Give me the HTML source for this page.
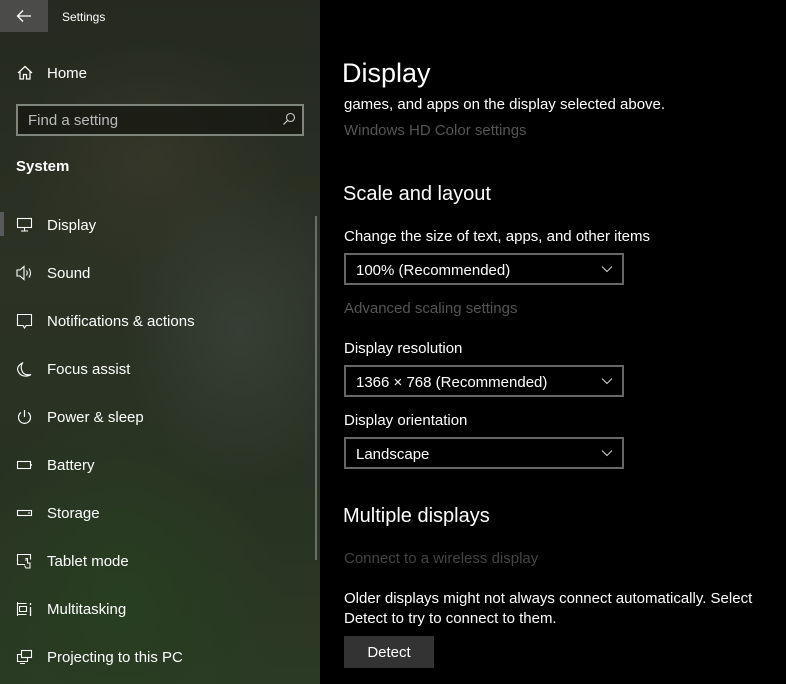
<!DOCTYPE html>
<html><head><meta charset="utf-8"><style>
*{margin:0;padding:0;box-sizing:border-box}
body{width:786px;height:684px;overflow:hidden;background:#000;font-family:"Liberation Sans",sans-serif;color:#fff;position:relative}
#side{position:absolute;left:0;top:0;width:320px;height:684px;background:
radial-gradient(ellipse 120px 160px at 240px 330px,rgba(70,76,72,.45),transparent),
radial-gradient(ellipse 140px 120px at 150px 160px,rgba(66,64,48,.45),transparent),
radial-gradient(ellipse 160px 200px at 120px 600px,rgba(40,64,34,.8),transparent),
linear-gradient(180deg,#25291f 0%,#2c3224 40%,#283222 70%,#2a3a24 100%)}
.a{position:absolute;white-space:nowrap}
.it{position:absolute;left:47px;font-size:15px;color:#fff;margin-top:1px}
.ic{position:absolute;left:16px;width:18px;height:16px}
.r{position:absolute;left:344px;font-size:15px;white-space:nowrap;margin-top:1px}
.dd{position:absolute;left:344px;width:280px;height:32px;border:2px solid #666;font-size:15px;padding:7px 0 0 10px}
.dd svg{position:absolute;right:9px;top:10px}
.g{color:#555}
</style></head><body>
<div id="side">
<div class="a" style="left:0;top:0;width:48px;height:32px;background:#4b4b49"></div>
<svg class="a" style="left:16px;top:9px" width="16" height="14"><path d="M15 7H2M7 1.5L1.5 7 7 12.5" stroke="#fff" stroke-width="1.3" fill="none"/></svg>
<div class="a" style="left:62px;top:10px;font-size:12px">Settings</div>
<svg class="a" style="left:17px;top:65px" width="16" height="15"><path d="M1 8L8 1.5 15 8M3 6.5V14H6.5V9.5H9.5V14H13V6.5" stroke="#fff" stroke-width="1.2" fill="none"/></svg>
<div class="it" style="top:64px">Home</div>
<div class="a" style="left:16px;top:104px;width:288px;height:32px;border:2px solid #7f857a;background:rgba(20,22,16,.7)"></div>
<div class="a" style="left:28px;top:112px;font-size:15px;color:#bbb">Find a setting</div>
<svg class="a" style="left:282px;top:112px" width="14" height="14"><circle cx="8.5" cy="5.5" r="4" stroke="#ccc" fill="none" stroke-width="1.1"/><path d="M5.5 8.5L1.5 12.5" stroke="#ccc" stroke-width="1.2"/></svg>
<div class="a" style="left:16px;top:158px;font-size:15px;font-weight:bold">System</div>
<div class="a" style="left:0;top:212px;width:4px;height:24px;background:#5a5a5a"></div>
<div class="a" style="left:315px;top:216px;width:2px;height:344px;background:#6a6e66"></div>
<svg class="ic" style="top:217px"><rect x="1.5" y="1.5" width="14" height="9" stroke="#fff" fill="none" stroke-width="1.1"/><path d="M8.5 11v3M5 14h7" stroke="#fff" stroke-width="1.1"/></svg>
<div class="it" style="top:216px">Display</div>
<svg class="ic" style="top:265px"><path d="M1 5h3l4-3.5v13L4 11H1z" stroke="#fff" fill="none" stroke-width="1.1"/><path d="M10.5 5.5q1.5 2.5 0 5M13 3.5q3 4.5 0 9" stroke="#fff" fill="none" stroke-width="1.1"/></svg>
<div class="it" style="top:264px">Sound</div>
<svg class="ic" style="top:313px"><path d="M1.5 1.5h14v11H10l-1.5 2.5L7 12.5H1.5z" stroke="#fff" fill="none" stroke-width="1.1"/></svg>
<div class="it" style="top:312px">Notifications &amp; actions</div>
<svg class="ic" style="top:361px"><path d="M7 1.5Q4 5 6 10t9 3.5Q12 15.5 8 15T2 10 7 1.5z" stroke="#fff" fill="none" stroke-width="1.1"/></svg>
<div class="it" style="top:360px">Focus assist</div>
<svg class="ic" style="top:409px"><path d="M5 3.5A6 6 0 1 0 12 3.5M8.5 1v7" stroke="#fff" fill="none" stroke-width="1.2"/></svg>
<div class="it" style="top:408px">Power &amp; sleep</div>
<svg class="ic" style="top:457px"><rect x="1.5" y="4.5" width="13" height="7" stroke="#fff" fill="none" stroke-width="1.1"/><path d="M15 7v2" stroke="#fff" stroke-width="1.5"/></svg>
<div class="it" style="top:456px">Battery</div>
<svg class="ic" style="top:505px"><rect x="1.5" y="5.5" width="14" height="5" stroke="#fff" fill="none" stroke-width="1.1"/><path d="M12 8h2" stroke="#fff"/></svg>
<div class="it" style="top:504px">Storage</div>
<svg class="ic" style="top:553px"><path d="M9 11.5H1.5v-10h13v5" stroke="#fff" fill="none" stroke-width="1.1"/><path d="M10 8v-2.5h1.5V10h2.5v5h-4l-1.5-2.5" stroke="#fff" fill="none" stroke-width="1"/></svg>
<div class="it" style="top:552px">Tablet mode</div>
<svg class="ic" style="top:601px"><path d="M1.5 1v14M1.5 2.5h9M1.5 13.5h9M3.5 5.5h7v5h-7z" stroke="#fff" fill="none" stroke-width="1.1"/><path d="M14.5 2v2M14.5 6v9" stroke="#fff" stroke-width="1.3"/></svg>
<div class="it" style="top:600px">Multitasking</div>
<svg class="ic" style="top:649px"><rect x="5.5" y="1.5" width="10" height="7" stroke="#fff" fill="none" stroke-width="1.1"/><path d="M5.5 5.5h-4v7h10v-4M4 14.5h5" stroke="#fff" fill="none" stroke-width="1.1"/></svg>
<div class="it" style="top:648px">Projecting to this PC</div>
</div>
<div class="r" style="left:342px;top:57px;font-size:27px;font-weight:300">Display</div>
<div class="r" style="top:95px">games, and apps on the display selected above.</div>
<div class="r g" style="top:121px">Windows HD Color settings</div>
<div class="r" style="left:343px;top:182px;font-size:20px">Scale and layout</div>
<div class="r" style="top:227px">Change the size of text, apps, and other items</div>
<div class="dd" style="top:253px">100% (Recommended)<svg width="12" height="8"><path d="M1 1.5l5 5 5-5" stroke="#ccc" fill="none" stroke-width="1.1"/></svg></div>
<div class="r g" style="top:299px">Advanced scaling settings</div>
<div class="r" style="top:339px">Display resolution</div>
<div class="dd" style="top:365px">1366 × 768 (Recommended)<svg width="12" height="8"><path d="M1 1.5l5 5 5-5" stroke="#ccc" fill="none" stroke-width="1.1"/></svg></div>
<div class="r" style="top:411px">Display orientation</div>
<div class="dd" style="top:437px">Landscape<svg width="12" height="8"><path d="M1 1.5l5 5 5-5" stroke="#ccc" fill="none" stroke-width="1.1"/></svg></div>
<div class="r" style="left:343px;top:504px;font-size:20px">Multiple displays</div>
<div class="r g" style="top:549px;color:#444">Connect to a wireless display</div>
<div class="r" style="top:589px">Older displays might not always connect automatically. Select</div>
<div class="r" style="top:609px">Detect to try to connect to them.</div>
<div class="a" style="left:344px;top:636px;width:90px;height:32px;background:#333;font-size:15px;text-align:center;padding-top:8px">Detect</div>
</body></html>
